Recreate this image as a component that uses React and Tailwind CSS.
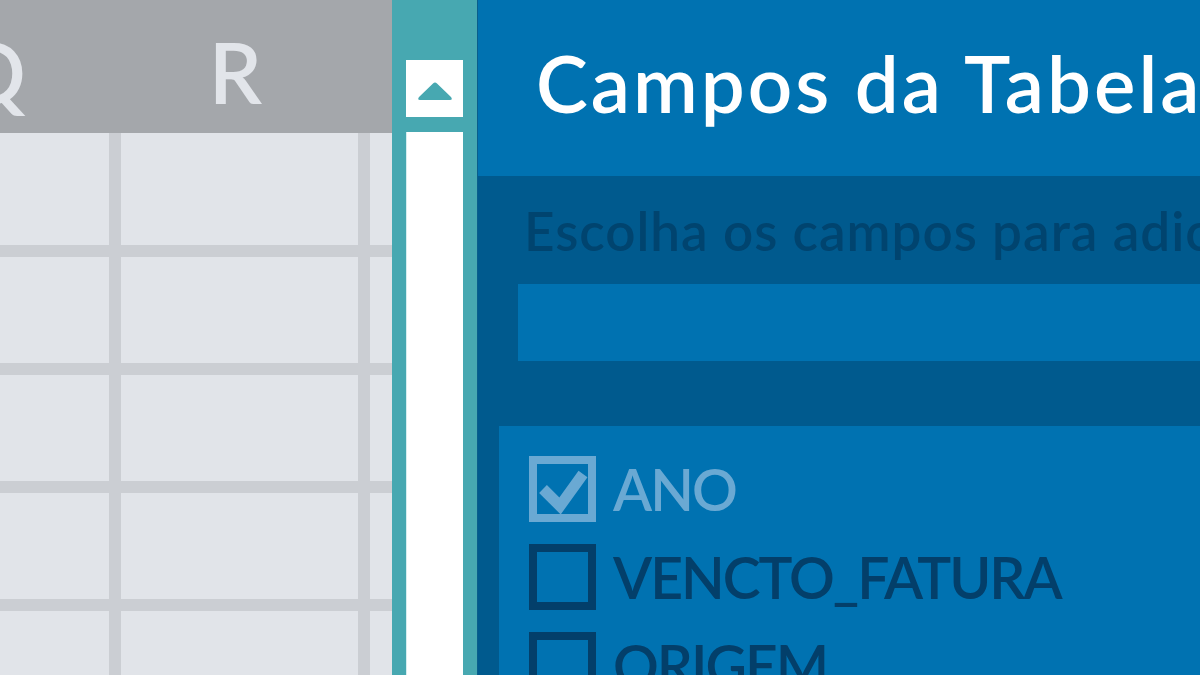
import React from "react";

const font = { fontFamily: "Lato, 'Source Sans Pro', 'Noto Sans', sans-serif" };

const fields = [
  { name: "ANO", checked: true },
  { name: "VENCTO_FATURA", checked: false },
  { name: "ORIGEM", checked: false },
];

const CheckRow = ({ name, checked }) => {
  const color = checked ? "text-[#6aa9d3]" : "text-[#033f6a]";
  const border = checked ? "border-[#6aa9d3]" : "border-[#033f6a]";
  return (
    <div className="flex items-center h-[66px]">
      <div className={`relative w-[67px] h-[66px] shrink-0 border-[8px] ${border}`}>
        {checked && (
          <svg
            className="absolute -left-[8px] -top-[8px]"
            width="67"
            height="66"
            viewBox="0 0 67 66"
          >
            <polyline
              points="14,33 31,50 54,18"
              fill="none"
              stroke="#6aa9d3"
              strokeWidth="11"
              strokeLinejoin="miter"
            />
          </svg>
        )}
      </div>
      <span
        className={`ml-[17px] whitespace-nowrap text-[57px] leading-none font-semibold tracking-[-2px] ${color}`}
      >
        {name}
      </span>
    </div>
  );
};

const App = () => {
  return (
    <div className="flex w-[1200px] h-[675px] overflow-hidden bg-[#0072b1]" style={font}>
      {/* spreadsheet */}
      <div className="w-[392px] shrink-0 flex flex-col overflow-hidden bg-[#cbced3]">
        <div className="h-[133px] shrink-0 bg-[#a4a7ab] flex text-[#e2e5ea] text-[84px] font-semibold leading-none">
          <div className="w-[220px] -ml-[118px] shrink-0 flex justify-center pt-[30px]">Q</div>
          <div className="w-[237px] ml-[19px] shrink-0 flex justify-center pt-[30px] pr-2">R</div>
        </div>
        <div className="grid grid-cols-[109px_237px_22px] grid-rows-[112px_106px_106px_106px_106px] gap-[12px]">
          {Array.from({ length: 15 }).map((_, i) => (
            <div key={i} className="bg-[#e1e4e9]" />
          ))}
        </div>
      </div>

      {/* scrollbar */}
      <div className="w-[86px] shrink-0 bg-[#47a8b1] border-r border-[#0a5e8c] pl-[14px] pr-[14px] pt-[60px] flex flex-col gap-[15px]">
        <div className="h-[57px] bg-white flex items-center justify-center pt-[6px]">
          <svg width="36" height="21" viewBox="0 0 36 21">
            <path
              d="M16 2.5 Q18 0.5 20 2.5 L34 16 Q36 19 33 19 L3 19 Q0 19 2 16 Z"
              fill="#47a8b1"
            />
          </svg>
        </div>
        <div className="flex-1 bg-white border-l border-[#d6eef0]" />
      </div>

      {/* pivot field list */}
      <div className="flex-1 flex flex-col min-w-0">
        <div className="h-[176px] shrink-0 pl-[58px] pt-[44px]">
          <h1 className="text-white text-[78px] leading-none font-semibold tracking-[3px] whitespace-nowrap">
            Campos da Tabela Dinâmica
          </h1>
        </div>
        <div className="flex-1 bg-[#005a8e] flex flex-col overflow-hidden">
          <p className="pl-[46px] pt-[28px] text-[53px] leading-none font-semibold tracking-[1px] text-[#00446f] whitespace-nowrap">
            Escolha os campos para adicionar ao relatório:
          </p>
          <div className="ml-[40px] mt-[27px] h-[77px] shrink-0 bg-[#0072b1]" />
          <div className="ml-[21px] mt-[65px] flex-1 bg-[#0072b1] pl-[30px] pt-[30px] flex flex-col gap-[22px]">
            {fields.map((f) => (
              <CheckRow key={f.name} name={f.name} checked={f.checked} />
            ))}
          </div>
        </div>
      </div>
    </div>
  );
};

export default App;
